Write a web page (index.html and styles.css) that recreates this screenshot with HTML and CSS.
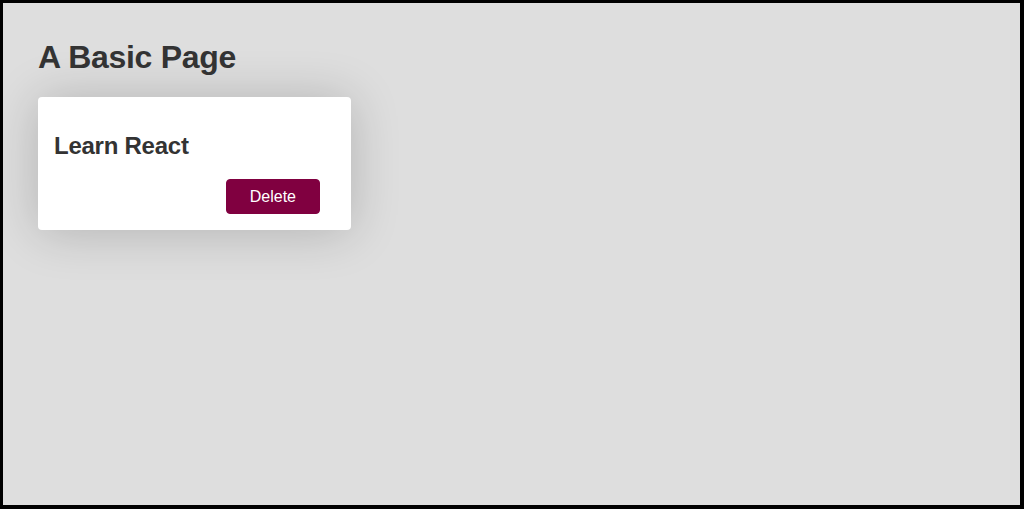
FILE: index.html
```html
<!DOCTYPE html>
<html lang="en">
<head>
<meta charset="utf-8">
<title>A Basic Page</title>
<link rel="stylesheet" href="styles.css">
</head>
<body>
<div class="frame">
  <h1 class="page-title">A Basic Page</h1>
  <div class="card">
    <h2 class="card-title">Learn React</h2>
    <div class="actions">
      <button class="btn">Delete</button>
    </div>
  </div>
</div>
</body>
</html>
```
FILE: styles.css
```css
html, body {
  margin: 0;
  padding: 0;
  height: 100%;
}
body {
  font-family: "Liberation Sans", Arial, sans-serif;
  color: #333;
}
.frame {
  box-sizing: border-box;
  height: 509px;
  border: 3px solid #000;
  border-right-width: 4px;
  border-bottom-width: 4px;
  background: #dedede;
  padding: 36px 35px 0;
}
.page-title {
  margin: 0 0 21px;
  font-size: 32px;
  font-weight: bold;
  line-height: 37px;
  letter-spacing: -0.3px;
  color: #333;
}
.card {
  width: 313px;
  box-sizing: border-box;
  background: #fff;
  border-radius: 4px;
  padding: 16px;
  box-shadow: 0 2px 50px rgba(0, 0, 0, 0.2);
}
.card-title {
  margin: 19px 0 19px;
  font-size: 24px;
  line-height: 28px;
  font-weight: bold;
  letter-spacing: -0.25px;
  color: #333;
}
.actions {
  display: flex;
  justify-content: flex-end;
  padding-right: 15px;
}
.btn {
  font-family: "Liberation Sans", Arial, sans-serif;
  font-size: 16px;
  line-height: 17px;
  padding: 8px 23px;
  border: 1px solid #800040;
  border-radius: 4px;
  background: #800040;
  color: #fff;
  cursor: pointer;
}
```
